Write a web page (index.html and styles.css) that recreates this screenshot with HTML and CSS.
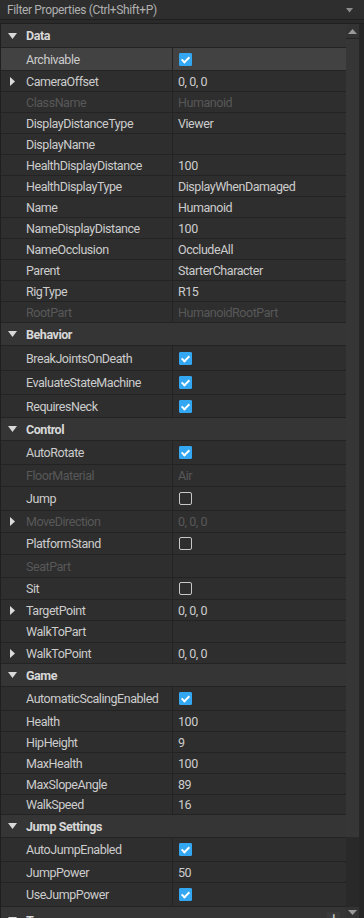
FILE: index.html
```html
<!DOCTYPE html>
<html>
<head>
<meta charset="utf-8">
<link rel="stylesheet" href="styles.css">
</head>
<body>
<div class="filter">
  <span class="filter-text">Filter Properties (Ctrl+Shift+P)</span>
  <svg class="filter-arrow" width="7" height="5" viewBox="0 0 7 5"><path d="M0 0H7L3.5 4.5Z" fill="#8c8c8c"/></svg>
</div>
<div class="panel">
  <div class="list">
    <div class="hdr h24"><svg class="tri" width="9" height="6" viewBox="0 0 9 6"><path d="M0 0H9L4.5 6Z"/></svg><span>Data</span></div>
    <div class="row h23 hover"><span class="exp"></span><span class="nm">Archivable</span><span class="vl"><i class="chk on"></i></span></div>
    <div class="row"><span class="exp"><svg class="rt" width="5" height="9" viewBox="0 0 5 9"><path d="M0 0L5 4.5L0 9Z"/></svg></span><span class="nm">CameraOffset</span><span class="vl">0, 0, 0</span></div>
    <div class="row dis"><span class="exp"></span><span class="nm">ClassName</span><span class="vl">Humanoid</span></div>
    <div class="row"><span class="exp"></span><span class="nm">DisplayDistanceType</span><span class="vl">Viewer</span></div>
    <div class="row"><span class="exp"></span><span class="nm">DisplayName</span><span class="vl"></span></div>
    <div class="row"><span class="exp"></span><span class="nm">HealthDisplayDistance</span><span class="vl">100</span></div>
    <div class="row"><span class="exp"></span><span class="nm">HealthDisplayType</span><span class="vl">DisplayWhenDamaged</span></div>
    <div class="row"><span class="exp"></span><span class="nm">Name</span><span class="vl">Humanoid</span></div>
    <div class="row"><span class="exp"></span><span class="nm">NameDisplayDistance</span><span class="vl">100</span></div>
    <div class="row"><span class="exp"></span><span class="nm">NameOcclusion</span><span class="vl">OccludeAll</span></div>
    <div class="row"><span class="exp"></span><span class="nm">Parent</span><span class="vl">StarterCharacter</span></div>
    <div class="row"><span class="exp"></span><span class="nm">RigType</span><span class="vl">R15</span></div>
    <div class="row dis"><span class="exp"></span><span class="nm">RootPart</span><span class="vl">HumanoidRootPart</span></div>

    <div class="hdr"><svg class="tri" width="9" height="6" viewBox="0 0 9 6"><path d="M0 0H9L4.5 6Z"/></svg><span>Behavior</span></div>
    <div class="row h25"><span class="exp"></span><span class="nm">BreakJointsOnDeath</span><span class="vl"><i class="chk on"></i></span></div>
    <div class="row h24"><span class="exp"></span><span class="nm">EvaluateStateMachine</span><span class="vl"><i class="chk on"></i></span></div>
    <div class="row h23"><span class="exp"></span><span class="nm">RequiresNeck</span><span class="vl"><i class="chk on"></i></span></div>

    <div class="hdr"><svg class="tri" width="9" height="6" viewBox="0 0 9 6"><path d="M0 0H9L4.5 6Z"/></svg><span>Control</span></div>
    <div class="row h24"><span class="exp"></span><span class="nm">AutoRotate</span><span class="vl"><i class="chk on"></i></span></div>
    <div class="row dis h22"><span class="exp"></span><span class="nm">FloorMaterial</span><span class="vl">Air</span></div>
    <div class="row h24"><span class="exp"></span><span class="nm">Jump</span><span class="vl"><i class="chk"></i></span></div>
    <div class="row dis h22"><span class="exp"><svg class="rt" width="5" height="9" viewBox="0 0 5 9"><path d="M0 0L5 4.5L0 9Z"/></svg></span><span class="nm">MoveDirection</span><span class="vl">0, 0, 0</span></div>
    <div class="row h22"><span class="exp"></span><span class="nm">PlatformStand</span><span class="vl"><i class="chk"></i></span></div>
    <div class="row dis h23"><span class="exp"></span><span class="nm">SeatPart</span><span class="vl"></span></div>
    <div class="row h22"><span class="exp"></span><span class="nm">Sit</span><span class="vl"><i class="chk"></i></span></div>
    <div class="row"><span class="exp"><svg class="rt" width="5" height="9" viewBox="0 0 5 9"><path d="M0 0L5 4.5L0 9Z"/></svg></span><span class="nm">TargetPoint</span><span class="vl">0, 0, 0</span></div>
    <div class="row h22"><span class="exp"></span><span class="nm">WalkToPart</span><span class="vl"></span></div>
    <div class="row"><span class="exp"><svg class="rt" width="5" height="9" viewBox="0 0 5 9"><path d="M0 0L5 4.5L0 9Z"/></svg></span><span class="nm">WalkToPoint</span><span class="vl">0, 0, 0</span></div>

    <div class="hdr"><svg class="tri" width="9" height="6" viewBox="0 0 9 6"><path d="M0 0H9L4.5 6Z"/></svg><span>Game</span></div>
    <div class="row h24"><span class="exp"></span><span class="nm">AutomaticScalingEnabled</span><span class="vl"><i class="chk on"></i></span></div>
    <div class="row"><span class="exp"></span><span class="nm">Health</span><span class="vl">100</span></div>
    <div class="row"><span class="exp"></span><span class="nm">HipHeight</span><span class="vl">9</span></div>
    <div class="row"><span class="exp"></span><span class="nm">MaxHealth</span><span class="vl">100</span></div>
    <div class="row"><span class="exp"></span><span class="nm">MaxSlopeAngle</span><span class="vl">89</span></div>
    <div class="row h20"><span class="exp"></span><span class="nm">WalkSpeed</span><span class="vl">16</span></div>

    <div class="hdr"><svg class="tri" width="9" height="6" viewBox="0 0 9 6"><path d="M0 0H9L4.5 6Z"/></svg><span>Jump Settings</span></div>
    <div class="row h24"><span class="exp"></span><span class="nm">AutoJumpEnabled</span><span class="vl"><i class="chk on"></i></span></div>
    <div class="row"><span class="exp"></span><span class="nm">JumpPower</span><span class="vl">50</span></div>
    <div class="row h24"><span class="exp"></span><span class="nm">UseJumpPower</span><span class="vl"><i class="chk on"></i></span></div>

    <div class="hdr last"><svg class="tri" width="9" height="6" viewBox="0 0 9 6"><path d="M0 0H9L4.5 6Z"/></svg><span>Tags</span><span class="plus">+</span></div>
  </div>
  <div class="scroll">
    <div class="sbtn up"><svg width="9" height="5" viewBox="0 0 9 5"><path d="M0 5H9L4.5 0Z" fill="#9a9a9a"/></svg></div>
    <div class="thumb"></div>
    <div class="track"></div>
    <div class="sbtn down"><svg width="9" height="5" viewBox="0 0 9 5"><path d="M0 0H9L4.5 5Z" fill="#9a9a9a"/></svg></div>
  </div>
  <div class="edge"></div>
</div>
</body>
</html>
```

FILE: styles.css
```css
* { box-sizing: border-box; }
html, body {
  margin: 0;
  padding: 0;
  width: 364px;
  height: 918px;
  overflow: hidden;
  background: #2a2a2a;
  font-family: "Roboto", "Liberation Sans", sans-serif;
  font-size: 12.5px;
  letter-spacing: -0.45px;
  color: #cccccc;
}
.filter {
  height: 20px;
  background: #2e2e2e;
  border-bottom: 1px solid #1f1f1f;
  display: flex;
  align-items: center;
  padding: 0 0 0 7px;
}
.filter-text {
  color: #b0b0b0;
  font-size: 12px;
  letter-spacing: -0.35px;
  flex: 1;
}
.filter-arrow {
  margin-right: 11px;
  margin-top: 1px;
}
.panel {
  margin-top: 3px;
  height: 895px;
  display: flex;
  border-top: 1px solid #1f1f1f;
}
.list {
  width: 346px;
  border-left: 1px solid #1f1f1f;
  position: relative;
  overflow: hidden;
}
.hdr {
  height: 23px;
  background: #353535;
  border-bottom: 1px solid #232323;
  display: flex;
  align-items: center;
  font-weight: bold;
  color: #d8d8d8;
  position: relative;
}
.hdr.h24 { height: 24px; }
.hdr .tri {
  fill: #d8d8d8;
  margin-left: 7px;
  margin-right: 9px;
}
.hdr.last { height: 24px; border-bottom: none; align-items: flex-start; padding-top: 6px; }
.hdr.last .tri { margin-top: 4px; }
.plus {
  position: absolute;
  right: 6px;
  top: 5px;
  width: 13px;
  height: 13px;
  font-weight: normal;
  color: #d0d0d0;
  font-size: 16px;
  line-height: 13px;
  text-align: center;
  background: #3b3b3b;
}
.row {
  height: 21px;
  display: flex;
  align-items: stretch;
  background: #2e2e2e;
  border-bottom: 1px solid #232323;
}
.row.h20 { height: 20px; }
.row.h22 { height: 22px; }
.row.h23 { height: 23px; }
.row.h24 { height: 24px; }
.row.h25 { height: 25px; }
.row.hover { background: #424242; }
.exp {
  width: 25px;
  display: flex;
  align-items: center;
  padding-left: 9px;
}
.exp .rt { fill: #dcdcdc; }
.nm {
  width: 147px;
  border-right: 1px solid #232323;
  display: flex;
  align-items: center;
  white-space: nowrap;
  color: #cccccc;
}
.vl {
  flex: 1;
  display: flex;
  align-items: center;
  padding-left: 5px;
  white-space: nowrap;
  color: #cccccc;
}
.row.dis .nm, .row.dis .vl { color: #585858; }
.chk {
  display: block;
  width: 13px;
  height: 13px;
  border: 1px solid #c8c8c8;
  border-radius: 2px;
  margin-left: 1px;
  position: relative;
}
.chk.on {
  background: #33a7f1;
  border-color: #33a7f1;
  border-radius: 1px;
}
.chk.on::after {
  content: "";
  position: absolute;
  left: 3px;
  top: 1px;
  width: 3px;
  height: 6px;
  border: solid #ffffff;
  border-width: 0 2px 2px 0;
  transform: rotate(45deg);
}
.scroll {
  width: 13px;
  display: flex;
  flex-direction: column;
  background: #292929;
}
.sbtn {
  height: 15px;
  background: #333333;
  display: flex;
  align-items: center;
  justify-content: center;
}
.sbtn.up { border-bottom: 1px solid #242424; }
.sbtn.down { height: 11px; align-items: flex-start; padding-top: 3px; }
.thumb {
  height: 798px;
  background: #363636;
}
.track {
  flex: 1;
  background: #292929;
}
.edge {
  width: 5px;
  background: #262626;
}
```
